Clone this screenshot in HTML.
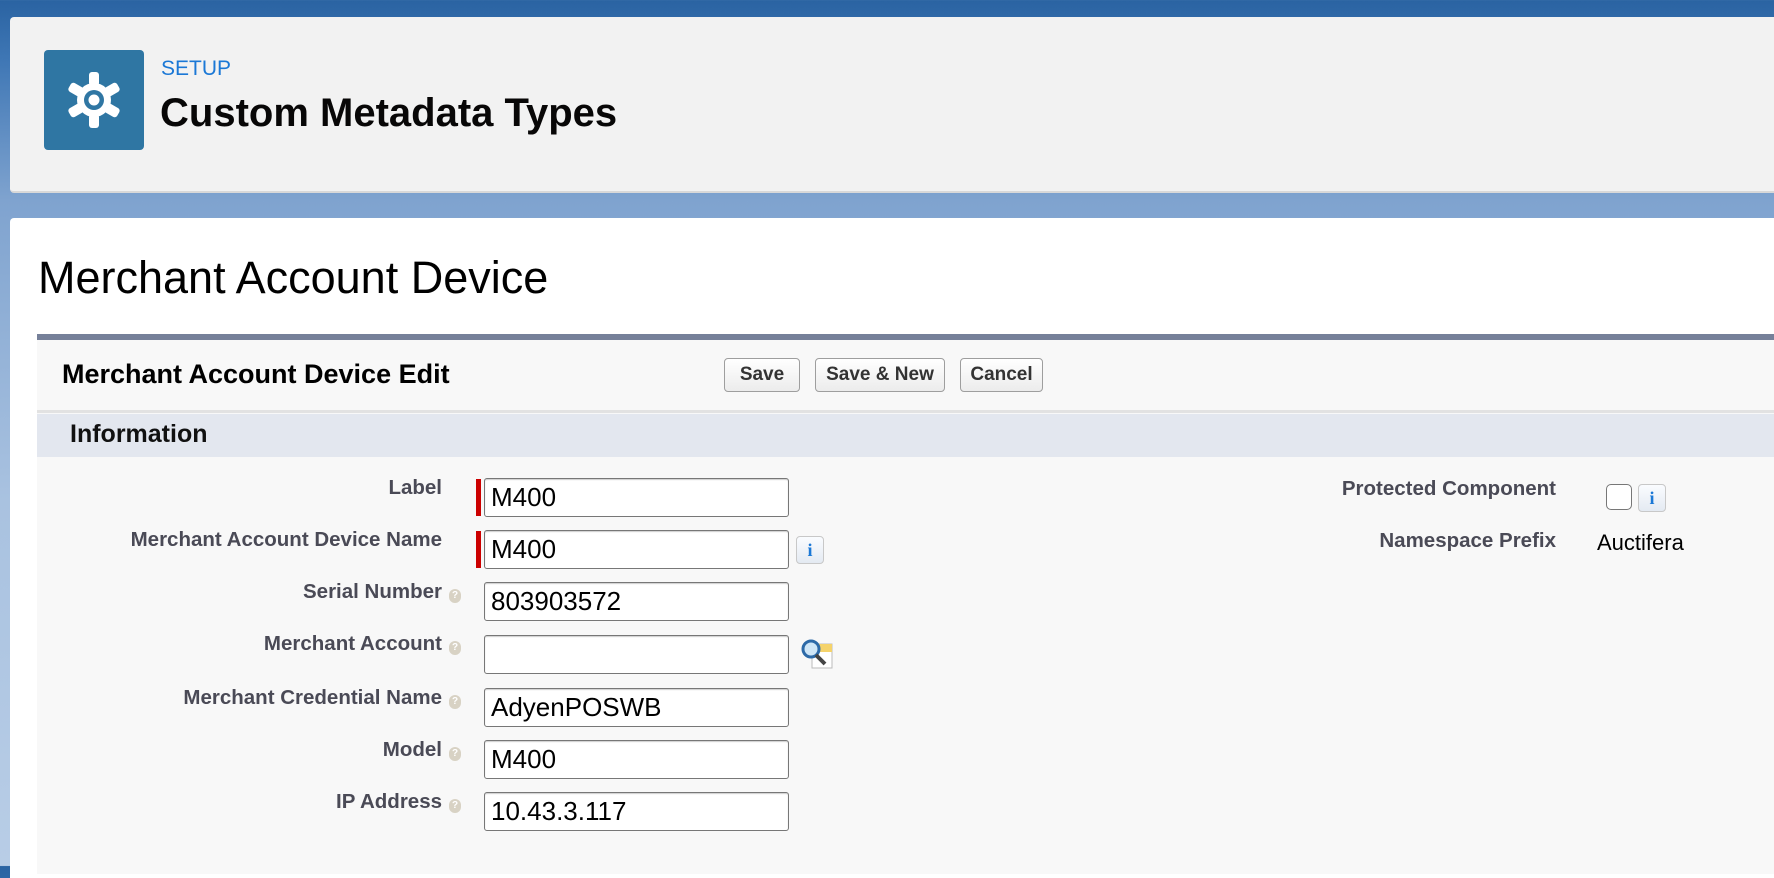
<!DOCTYPE html>
<html><head><meta charset="utf-8"><style>
*{margin:0;padding:0;box-sizing:border-box}
body{width:1774px;height:866px;overflow:hidden;position:relative;font-family:"Liberation Sans",Arial,sans-serif;background:linear-gradient(180deg,#2a63a2 0px,#3f77b5 60px,#7fa3cf 200px,#a9c2e0 500px,#b8cde6 866px)}
.abs{position:absolute}
#hdr{left:10px;top:17px;width:1764px;height:176px;background:#f2f2f2;border-radius:4px 0 0 4px;border-bottom:2px solid #d8d8d8}
#ico{left:44px;top:50px;width:100px;height:100px;background:#2f76a3;border-radius:4px}
#setup{left:161px;top:57px;font-size:21px;color:#1b78d6}
#title{left:160px;top:91px;font-size:40px;font-weight:bold;color:#080707}
#card{left:10px;top:218px;width:1764px;height:660px;background:#fff;border-radius:4px 0 0 0}
#h1{left:38px;top:252px;font-size:45px;color:#000}
#panel{left:37px;top:334px;width:1737px;height:540px;background:#f8f8f8;border-top:6px solid #768099}
#ptitle{left:62px;top:359px;font-size:27px;font-weight:bold;color:#000}
.btn{top:358px;height:34px;border:1px solid #9e9e9e;border-radius:4px;background:linear-gradient(#fff,#ececec);font-size:19px;font-weight:bold;color:#333;text-align:center;line-height:32px}
#sep{left:37px;top:410px;width:1737px;height:3px;background:#e2e2e2}
#band{left:37px;top:414px;width:1737px;height:43px;background:#e3e7ef}
#info{left:70px;top:420px;font-size:25px;font-weight:bold;color:#111}
.lbl{font-size:20.5px;font-weight:bold;color:#4a4a56;text-align:right;width:420px}
.inp{left:484px;width:305px;height:39px;border:1px solid #777;border-radius:3px;background:#fff;font-size:26px;color:#000;padding:3px 0 0 6px;box-shadow:inset 0 1px 1px #ccc}
.req{left:476px;width:5px;height:37px;background:#c00}
.help{width:12px;height:14px;border-radius:6px;background:#d8d2c4;color:#fff;font-size:10px;font-weight:bold;text-align:center;line-height:14px}
.ib{width:28px;height:28px;border:1px solid #c8c8c8;border-radius:4px;background:linear-gradient(#fafcff,#e4eaf2);color:#1b78d6;font-family:"Liberation Serif",serif;font-weight:bold;font-size:18px;text-align:center;line-height:26px}
</style></head><body>
<div id="hdr" class="abs"></div>
<div id="ico" class="abs"><svg width="100" height="100" viewBox="0 0 100 100"><g fill="#fff" transform="translate(50,50)"><circle r="17"/><g id="t"><rect x="-5" y="-28" width="10" height="14" rx="3"/></g><use href="#t" transform="rotate(60)"/><use href="#t" transform="rotate(120)"/><use href="#t" transform="rotate(180)"/><use href="#t" transform="rotate(240)"/><use href="#t" transform="rotate(300)"/></g><circle cx="50" cy="50" r="10" fill="#2f76a3"/><circle cx="50" cy="50" r="5.5" fill="#fff"/></svg></div>
<div id="setup" class="abs">SETUP</div>
<div id="title" class="abs">Custom Metadata Types</div>
<div id="card" class="abs"></div>
<div id="h1" class="abs">Merchant Account Device</div>
<div id="panel" class="abs"></div>
<div id="ptitle" class="abs">Merchant Account Device Edit</div>
<div class="abs btn" style="left:724px;width:76px">Save</div>
<div class="abs btn" style="left:815px;width:130px">Save &amp; New</div>
<div class="abs btn" style="left:960px;width:83px">Cancel</div>
<div id="sep" class="abs"></div>
<div id="band" class="abs"></div>
<div id="info" class="abs">Information</div>

<div class="abs lbl" style="left:22px;top:476px">Label</div>
<div class="abs req" style="top:479px"></div>
<div class="abs inp" style="top:478px">M400</div>

<div class="abs lbl" style="left:22px;top:528px">Merchant Account Device Name</div>
<div class="abs req" style="top:531px"></div>
<div class="abs inp" style="top:530px">M400</div>
<div class="abs ib" style="left:796px;top:536px">i</div>

<div class="abs lbl" style="left:22px;top:580px">Serial Number</div>
<div class="abs help" style="left:449px;top:589px">?</div>
<div class="abs inp" style="top:582px">803903572</div>

<div class="abs lbl" style="left:22px;top:632px">Merchant Account</div>
<div class="abs help" style="left:449px;top:641px">?</div>
<div class="abs inp" style="top:635px"></div>
<div class="abs" style="left:800px;top:638px"><svg width="34" height="32" viewBox="0 0 34 32"><rect x="12" y="6" width="20" height="24" fill="#fff" stroke="#bbb"/><rect x="18" y="6" width="14" height="8" fill="#f5d36b"/><circle cx="11" cy="11" r="8" fill="#cfe6f7" stroke="#2d6aa8" stroke-width="3"/><path d="M16 17l9 9" stroke="#444" stroke-width="4"/></svg></div>

<div class="abs lbl" style="left:22px;top:686px">Merchant Credential Name</div>
<div class="abs help" style="left:449px;top:695px">?</div>
<div class="abs inp" style="top:688px">AdyenPOSWB</div>

<div class="abs lbl" style="left:22px;top:738px">Model</div>
<div class="abs help" style="left:449px;top:747px">?</div>
<div class="abs inp" style="top:740px">M400</div>

<div class="abs lbl" style="left:22px;top:790px">IP Address</div>
<div class="abs help" style="left:449px;top:799px">?</div>
<div class="abs inp" style="top:792px">10.43.3.117</div>

<div class="abs lbl" style="left:1136px;top:477px">Protected Component</div>
<div class="abs" style="left:1606px;top:484px;width:26px;height:26px;border:1px solid #777;border-radius:5px;background:#fff"></div>
<div class="abs ib" style="left:1638px;top:484px">i</div>
<div class="abs lbl" style="left:1136px;top:529px">Namespace Prefix</div>
<div class="abs" style="left:1597px;top:530px;font-size:22px;color:#000">Auctifera</div>
</body></html>
